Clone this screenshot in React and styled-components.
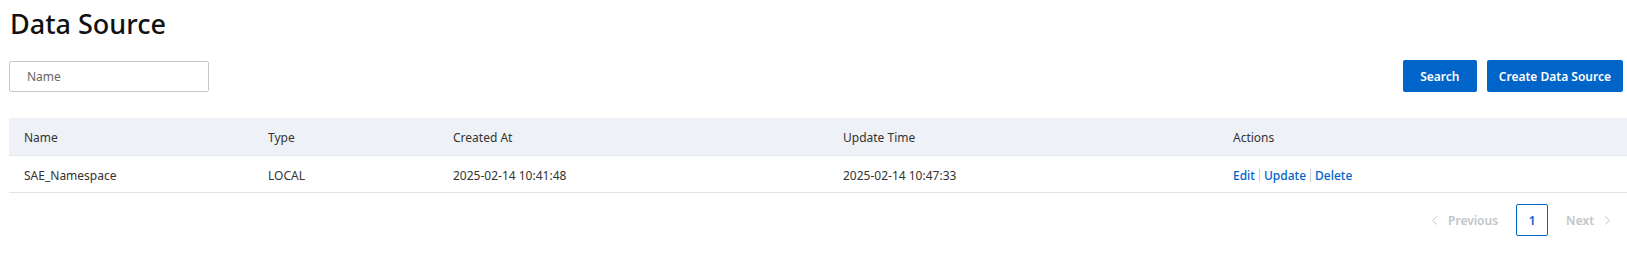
import React from "react";
import styled, { createGlobalStyle } from "styled-components";
import { ChevronLeft, ChevronRight } from "lucide-react";

const GlobalStyle = createGlobalStyle`
  body {
    margin: 0;
    background: #fff;
    font-family: "Noto Sans", "Open Sans", sans-serif;
    color: #333;
  }
`;

const columns = [
  { key: "name", label: "Name", width: 244 },
  { key: "type", label: "Type", width: 185 },
  { key: "createdAt", label: "Created At", width: 390 },
  { key: "updatedAt", label: "Update Time", width: 390 },
  { key: "actions", label: "Actions" },
];

const rows = [
  {
    name: "SAE_Namespace",
    type: "LOCAL",
    createdAt: "2025-02-14 10:41:48",
    updatedAt: "2025-02-14 10:47:33",
  },
];

const App = () => {
  return (
    <>
      <GlobalStyle />
      <Page>
        <Title>Data Source</Title>
        <Toolbar>
          <SearchInput placeholder="Name" />
          <Buttons>
            <PrimaryButton>Search</PrimaryButton>
            <PrimaryButton>Create Data Source</PrimaryButton>
          </Buttons>
        </Toolbar>
        <Table>
          <colgroup>
            {columns.map((c) => (
              <col key={c.key} width={c.width} />
            ))}
          </colgroup>
          <thead>
            <tr>
              {columns.map((c) => (
                <Th key={c.key}>{c.label}</Th>
              ))}
            </tr>
          </thead>
          <tbody>
            {rows.map((r) => (
              <tr key={r.name}>
                <Td>{r.name}</Td>
                <Td>{r.type}</Td>
                <Td>{r.createdAt}</Td>
                <Td>{r.updatedAt}</Td>
                <Td>
                  <Actions>
                    <ActionLink>Edit</ActionLink>
                    <Sep />
                    <ActionLink>Update</ActionLink>
                    <Sep />
                    <ActionLink>Delete</ActionLink>
                  </Actions>
                </Td>
              </tr>
            ))}
          </tbody>
        </Table>
        <Pagination>
          <PageNav disabled>
            <ChevronLeft size={15} strokeWidth={1.6} />
            Previous
          </PageNav>
          <PageNumber $active>1</PageNumber>
          <PageNav disabled>
            Next
            <ChevronRight size={15} strokeWidth={1.6} />
          </PageNav>
        </Pagination>
      </Page>
    </>
  );
};

export default App;

const Page = styled.div`
  padding: 6px 0 0 9px;
`;

const Title = styled.h1`
  margin: 0 0 0 1px;
  font-size: 27px;
  line-height: 36px;
  font-weight: 500;
  color: #111;
`;

const Toolbar = styled.div`
  display: flex;
  justify-content: space-between;
  align-items: center;
  margin-top: 18px;
  padding-right: 4px;
`;

const SearchInput = styled.input`
  box-sizing: border-box;
  width: 200px;
  height: 31px;
  border: 1px solid #c4c6cc;
  border-radius: 2px;
  padding: 0 17px;
  font-family: inherit;
  font-size: 12px;
  outline: none;
  &::placeholder {
    color: #666;
  }
`;

const Buttons = styled.div`
  display: flex;
  gap: 10px;
`;

const PrimaryButton = styled.button`
  height: 32px;
  padding: 0 12px;
  min-width: 74px;
  border: none;
  border-radius: 2px;
  background: #0064c8;
  color: #fff;
  font-family: inherit;
  font-size: 12px;
  font-weight: 600;
  cursor: pointer;
`;

const Table = styled.table`
  width: 100%;
  margin-top: 26px;
  border-collapse: collapse;
  table-layout: fixed;
  font-size: 12px;
`;

const Th = styled.th`
  height: 36px;
  padding: 1px 0 0 15px;
  text-align: left;
  font-weight: 400;
  color: #333;
  background: #eef1f6;
  border-bottom: 1px solid #e3e4e6;
`;

const Td = styled.td`
  height: 34px;
  padding: 2px 0 0 15px;
  color: #333;
  border-bottom: 1px solid #e3e4e6;
`;

const Actions = styled.div`
  display: flex;
  align-items: center;
`;

const ActionLink = styled.a`
  color: #0064c8;
  font-weight: 500;
  cursor: pointer;
`;

const Sep = styled.span`
  width: 1px;
  height: 13px;
  margin: 0 4px;
  background: #c9cdd3;
`;

const Pagination = styled.div`
  display: flex;
  justify-content: flex-end;
  align-items: center;
  gap: 18px;
  margin-top: 11px;
  padding-right: 12px;
  font-size: 12px;
`;

const PageNav = styled.button`
  display: flex;
  align-items: center;
  gap: 6px;
  padding: 0;
  border: none;
  background: none;
  font-family: inherit;
  font-size: 12px;
  font-weight: 600;
  color: ${(p) => (p.disabled ? "#c1c4c8" : "#333")};
`;

const PageNumber = styled.div`
  box-sizing: border-box;
  width: 32px;
  height: 32px;
  display: flex;
  align-items: center;
  justify-content: center;
  border: 1px solid ${(p) => (p.$active ? "#0064c8" : "#c4c6cc")};
  border-radius: 2px;
  color: #0064c8;
  font-weight: 600;
`;
